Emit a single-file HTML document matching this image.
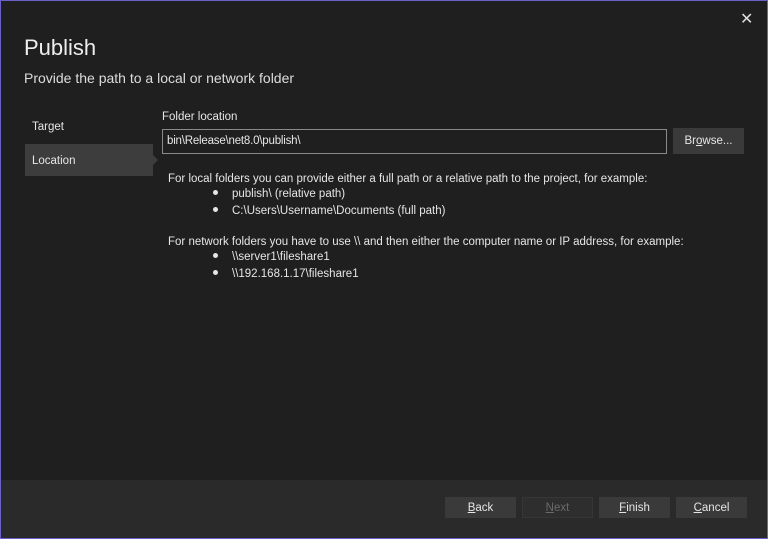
<!DOCTYPE html>
<html><head><style>
html,body{margin:0;padding:0}
body{width:768px;height:539px;background:#1f1f1f;font-family:"Liberation Sans",sans-serif;color:#e6e6e6;position:relative;overflow:hidden}
.frame{position:absolute;left:0;top:0;width:766px;height:537px;border:1px solid #6b5fc9}
.a{position:absolute;white-space:nowrap}
.s{font-size:11.5px;letter-spacing:0}
.footer{position:absolute;left:1px;top:480px;width:766px;height:58px;background:#2a2a2a}
.btn{position:absolute;top:497px;width:71px;height:21px;background:#3a3a3a;font-size:11.5px;text-align:center;line-height:22px;color:#e6e6e6}
.dis{background:#2e2e2e;color:#6a6a6a;border:1px solid #363636;box-sizing:border-box;line-height:20px}
u{text-decoration:underline}
.b{display:inline-block;width:5px;height:5px;border-radius:50%;background:#e6e6e6;margin-right:14px;vertical-align:2px}
</style></head><body>
<div class="frame"></div>
<div class="a" style="left:740px;top:9px;font-size:16px;color:#ddd">✕</div>
<div class="a" style="left:24px;top:35px;font-size:22px;color:#eee">Publish</div>
<div class="a" style="left:24px;top:70px;font-size:14px;color:#ddd">Provide the path to a local or network folder</div>
<div class="a s" style="left:32px;top:121px">Target</div>
<div class="a" style="left:25px;top:144px;width:128px;height:32px;background:#3d3d3d"></div>
<div class="a" style="left:153px;top:155px;width:0;height:0;border-top:5px solid transparent;border-bottom:5px solid transparent;border-left:5px solid #3d3d3d"></div>
<div class="a s" style="left:32px;top:155px">Location</div>
<div class="a s" style="left:162px;top:111px">Folder location</div>
<div class="a" style="left:162px;top:129px;width:503px;height:23px;border:1px solid #8a8a8a;background:#1f1f1f"></div>
<div class="a s" style="left:167px;top:135px;letter-spacing:-0.2px">bin\Release\net8.0\publish\</div>
<div class="btn" style="left:673px;top:128px;width:71px;height:26px;line-height:26px;background:#3a3a3a">Br<u>o</u>wse...</div>
<div class="a s" style="left:168px;top:173px">For local folders you can provide either a full path or a relative path to the project, for example:</div>
<div class="a s" style="left:213px;top:188px"><span class="b"></span>publish\ (relative path)</div>
<div class="a s" style="left:213px;top:205px"><span class="b"></span>C:\Users\Username\Documents (full path)</div>
<div class="a s" style="left:168px;top:236px">For network folders you have to use \\ and then either the computer name or IP address, for example:</div>
<div class="a s" style="left:213px;top:251px"><span class="b"></span>\\server1\fileshare1</div>
<div class="a s" style="left:213px;top:268px"><span class="b"></span>\\192.168.1.17\fileshare1</div>
<div class="footer"></div>
<div class="btn" style="left:445px"><u>B</u>ack</div>
<div class="btn dis" style="left:522px"><u>N</u>ext</div>
<div class="btn" style="left:599px"><u>F</u>inish</div>
<div class="btn" style="left:676px"><u>C</u>ancel</div>
</body></html>
